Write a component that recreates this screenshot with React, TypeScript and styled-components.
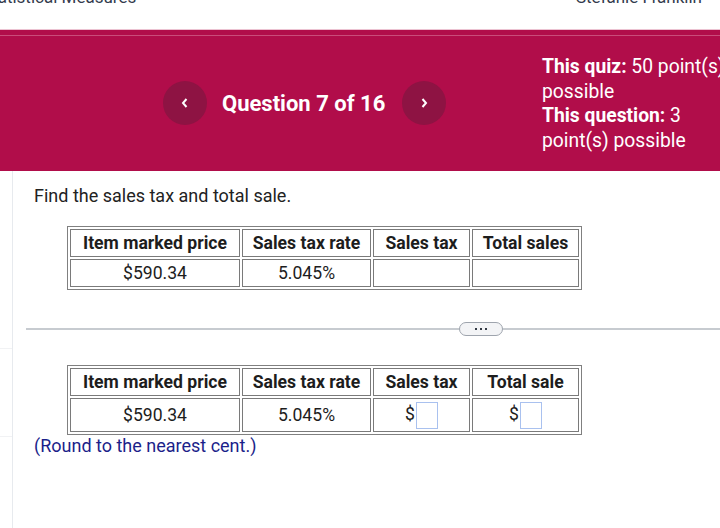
import type { FC } from "react";
import styled, { createGlobalStyle } from "styled-components";

const GlobalStyle = createGlobalStyle`
  html, body {
    margin: 0;
    padding: 0;
    background: #ffffff;
    overflow: hidden;
  }
  body {
    font-family: Roboto, "Liberation Sans", Arial, sans-serif;
    color: #222222;
  }
`;

const Page = styled.div`
  width: 720px;
  height: 528px;
  overflow: hidden;
  display: flex;
  flex-direction: column;
`;

const TopBar = styled.div`
  height: 29px;
  display: flex;
  justify-content: space-between;
  overflow: hidden;
  color: #333b4d;
  font-size: 17px;
  line-height: 17px;
  border-bottom: 1px solid #ecc3d2;
`;

const TopText = styled.div<{ $right?: boolean }>`
  margin-top: -11px;
  margin-left: ${(p) => (p.$right ? "0" : "-18px")};
  margin-right: ${(p) => (p.$right ? "18px" : "0")};
  white-space: nowrap;
`;

const Header = styled.header`
  background: #b10d4a;
  padding-top: 5px;
`;

const HeaderInner = styled.div`
  border-top: 1px solid #c94c7a;
  height: 135px;
  display: flex;
  align-items: center;
  padding-left: 163px;
`;

const Nav = styled.div`
  display: flex;
  align-items: center;
  gap: 15px;
  margin-top: -1px;
`;

const NavButton = styled.button`
  width: 44px;
  height: 44px;
  border-radius: 50%;
  border: none;
  background: #8e1343;
  color: #ffffff;
  display: flex;
  align-items: center;
  justify-content: center;
  padding: 0;
`;

const QuestionTitle = styled.div`
  color: #ffffff;
  font-size: 22px;
  font-weight: 700;
  width: 165px;
  text-align: left;
  white-space: nowrap;
`;

const Info = styled.div`
  margin-left: 96px;
  margin-top: 1px;
  width: 200px;
  flex-shrink: 0;
  color: #ffffff;
  font-size: 19.3px;
  line-height: 24.5px;
`;

const InfoLine = styled.div`
  white-space: nowrap;
`;

const Body = styled.div`
  flex: 1;
  display: flex;
`;

const Sidebar = styled.div`
  width: 12px;
  border-right: 1px solid #e7eaee;
  display: flex;
  flex-direction: column;
`;

const SideCell = styled.div<{ $h: number }>`
  height: ${(p) => p.$h}px;
  border-bottom: 1px solid #f1f2f4;
`;

const Content = styled.main`
  flex: 1;
  padding-left: 21px;
  padding-top: 14px;
  font-size: 18px;
`;

const Prompt = styled.p`
  margin: 0 0 19px 0;
  line-height: 22px;
`;

const Table = styled.table`
  margin-left: 33px;
  border: 1px solid #808080;
  border-collapse: separate;
  border-spacing: 2px;
  font-size: 17.6px;
`;

const Cell = styled.td<{ $w: number; $head?: boolean; $tall?: boolean }>`
  width: ${(p) => p.$w - 2}px;
  height: ${(p) => (p.$tall ? 32 : 26)}px;
  padding: 0;
  border: 1px solid #7a7a7a;
  text-align: center;
  font-weight: ${(p) => (p.$head ? 700 : 400)};
  color: #1d1d1d;
  line-height: 20px;
  white-space: nowrap;
`;

const Separator = styled.div`
  display: flex;
  align-items: center;
  margin: 32px 0 29px -8px;
`;

const Rule = styled.div<{ $w?: number }>`
  height: 2px;
  background: #c7cbd0;
  flex: ${(p) => (p.$w ? `0 0 ${p.$w}px` : "1")};
`;

const Pill = styled.div`
  width: 42px;
  height: 12px;
  border: 1px solid #9ea4ad;
  border-radius: 7px;
  background: #f3f4f6;
  display: flex;
  align-items: center;
  justify-content: center;
  gap: 3px;
`;

const Dot = styled.span`
  width: 2px;
  height: 2px;
  background: #333a44;
`;

const AnswerBox = styled.span`
  display: inline-block;
  width: 20px;
  height: 25px;
  border: 1px solid #a9c1ef;
  vertical-align: middle;
  margin-left: 1px;
`;

const Note = styled.div`
  color: #1c1f8a;
  line-height: 22px;
`;

const widths = [170, 129, 97, 107];

const Chevron: FC<{ dir: "left" | "right" }> = ({ dir }) => (
  <svg width="10" height="12" viewBox="0 0 10 12">
    <path
      d={dir === "left" ? "M6.5 2 L3 6 L6.5 10" : "M3.5 2 L7 6 L3.5 10"}
      fill="none"
      stroke="#ffffff"
      strokeWidth="2"
    />
  </svg>
);

const App: FC = () => {
  return (
    <Page>
      <GlobalStyle />
      <TopBar>
        <TopText>Statistical Measures</TopText>
        <TopText $right>Stefanie Franklin</TopText>
      </TopBar>
      <Header>
        <HeaderInner>
          <Nav>
            <NavButton aria-label="Previous question">
              <Chevron dir="left" />
            </NavButton>
            <QuestionTitle>Question 7 of 16</QuestionTitle>
            <NavButton aria-label="Next question">
              <Chevron dir="right" />
            </NavButton>
          </Nav>
          <Info>
            <InfoLine>
              <b>This quiz:</b> 50 point(s)
            </InfoLine>
            <InfoLine>possible</InfoLine>
            <InfoLine>
              <b>This question:</b> 3
            </InfoLine>
            <InfoLine>point(s) possible</InfoLine>
          </Info>
        </HeaderInner>
      </Header>
      <Body>
        <Sidebar>
          <SideCell $h={177} />
          <SideCell $h={87} />
        </Sidebar>
        <Content>
          <Prompt>Find the sales tax and total sale.</Prompt>
          <Table>
            <tbody>
              <tr>
                <Cell $w={widths[0]} $head>Item marked price</Cell>
                <Cell $w={widths[1]} $head>Sales tax rate</Cell>
                <Cell $w={widths[2]} $head>Sales tax</Cell>
                <Cell $w={widths[3]} $head>Total sales</Cell>
              </tr>
              <tr>
                <Cell $w={widths[0]}>$590.34</Cell>
                <Cell $w={widths[1]}>5.045%</Cell>
                <Cell $w={widths[2]} />
                <Cell $w={widths[3]} />
              </tr>
            </tbody>
          </Table>
          <Separator>
            <Rule $w={433} />
            <Pill>
              <Dot />
              <Dot />
              <Dot />
            </Pill>
            <Rule />
          </Separator>
          <Table>
            <tbody>
              <tr>
                <Cell $w={widths[0]} $head>Item marked price</Cell>
                <Cell $w={widths[1]} $head>Sales tax rate</Cell>
                <Cell $w={widths[2]} $head>Sales tax</Cell>
                <Cell $w={widths[3]} $head>Total sale</Cell>
              </tr>
              <tr>
                <Cell $w={widths[0]} $tall>$590.34</Cell>
                <Cell $w={widths[1]} $tall>5.045%</Cell>
                <Cell $w={widths[2]} $tall>
                  $<AnswerBox />
                </Cell>
                <Cell $w={widths[3]} $tall>
                  $<AnswerBox />
                </Cell>
              </tr>
            </tbody>
          </Table>
          <Note>(Round to the nearest cent.)</Note>
        </Content>
      </Body>
    </Page>
  );
};

export default App;
